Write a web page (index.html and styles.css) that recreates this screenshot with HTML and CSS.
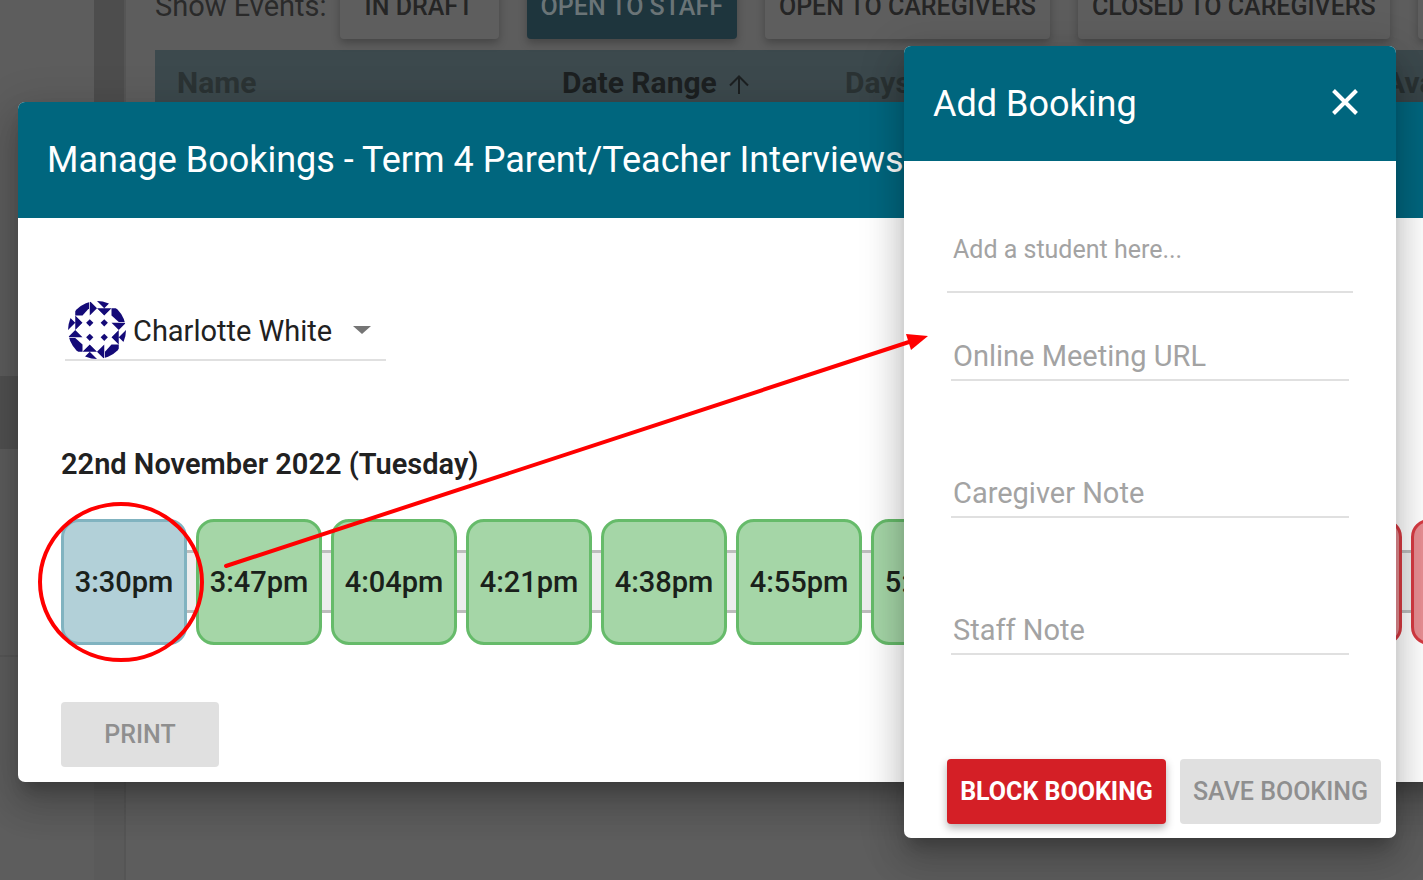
FILE: index.html
```
<!DOCTYPE html>
<html lang="en">
<head>
<meta charset="utf-8">
<title>Manage Bookings</title>
<meta name="viewport" content="width=device-width, initial-scale=1">
<link rel="stylesheet" href="styles.css">
</head>
<body>
<div class="app">
  <aside class="sidebar">
    <div class="sidebar-block"></div>
    <div class="sidebar-active"></div>
    <div class="sidebar-group"></div>
  </aside>
  <div class="gutter"></div>
  <main class="page">
    <div class="filters">
      <span class="filters-label">Show Events:</span>
      <button class="filter" type="button">IN DRAFT</button>
      <button class="filter filter-on" type="button">OPEN TO STAFF</button>
      <button class="filter" type="button">OPEN TO CAREGIVERS</button>
      <button class="filter" type="button">CLOSED TO CAREGIVERS</button>
      <button class="filter" type="button" aria-label="More"></button>
    </div>
    <table class="events">
      <thead>
        <tr>
          <th class="col-name">Name</th>
          <th class="col-range">Date Range
            <svg class="sort" viewBox="0 0 20 20" aria-hidden="true"><path d="M10 19V2M1 10.500L10 1.500L19 10.500"/></svg>
          </th>
          <th class="col-days">Days</th>
          <th class="col-avail">Available</th>
        </tr>
      </thead>
    </table>
  </main>

  <section class="dialog manage" aria-label="Manage Bookings">
    <header class="dialog-head">
      <h2 class="dialog-title">Manage Bookings - Term 4 Parent/Teacher Interviews</h2>
    </header>
    <div class="manage-body">
      <div class="staff">
        <svg class="avatar" viewBox="0 0 4 4" aria-hidden="true">
          <defs>
            <clipPath id="round"><circle cx="2" cy="2" r="2"/></clipPath>
            <g id="quarter">
              <path d="M.5 0H1.450V.5L1 1H.5Z"/>
              <path d="M1.500 0L2 .5L1.500 1Z"/>
              <path d="M2 0H3L2.500 .5ZM2 .5H3L2.500 1Z"/>
              <path d="M1.500 1.250L1.750 1.500L1.500 1.750L1.250 1.500Z"/>
            </g>
          </defs>
          <g clip-path="url(#round)">
            <use href="#quarter"/>
            <use href="#quarter" transform="rotate(90 2 2)"/>
            <use href="#quarter" transform="rotate(180 2 2)"/>
            <use href="#quarter" transform="rotate(270 2 2)"/>
          </g>
        </svg>
        <select class="staff-select" aria-label="Staff member"><option>Charlotte White</option></select>
        <svg class="caret" viewBox="0 0 18 8" aria-hidden="true"><path d="M0 0H18L9 8Z"/></svg>
      </div>
      <h3 class="day">22nd November 2022 (Tuesday)</h3>
      <div class="slots">
        <button class="slot slot-current" type="button">3:30pm</button>
        <button class="slot" type="button">3:47pm</button>
        <button class="slot" type="button">4:04pm</button>
        <button class="slot" type="button">4:21pm</button>
        <button class="slot" type="button">4:38pm</button>
        <button class="slot" type="button">4:55pm</button>
        <button class="slot" type="button">5:12pm</button>
        <button class="slot" type="button">5:29pm</button>
        <button class="slot" type="button">5:46pm</button>
        <button class="slot slot-blocked" type="button">6:03pm</button>
        <button class="slot slot-blocked" type="button">6:20pm</button>
      </div>
      <button class="btn btn-off print" type="button" disabled>PRINT</button>
    </div>
  </section>

  <section class="dialog booking" aria-label="Add Booking">
    <header class="dialog-head">
      <h2 class="dialog-title">Add Booking</h2>
      <button class="close" type="button" aria-label="Close">
        <svg class="close-icon" viewBox="0 0 26 26" aria-hidden="true"><path d="M1.500 1.500L24.500 24.500M24.500 1.500L1.500 24.500"/></svg>
      </button>
    </header>
    <form class="booking-form">
      <input class="student" type="text" placeholder="Add a student here..." aria-label="Student">
      <div class="notes">
        <input class="note" type="text" placeholder="Online Meeting URL" aria-label="Online Meeting URL">
        <input class="note" type="text" placeholder="Caregiver Note" aria-label="Caregiver Note">
        <input class="note" type="text" placeholder="Staff Note" aria-label="Staff Note">
      </div>
      <div class="actions">
        <button class="btn btn-block" type="button">BLOCK BOOKING</button>
        <button class="btn btn-off" type="button" disabled>SAVE BOOKING</button>
      </div>
    </form>
  </section>

  <svg class="markup" width="1" height="1" aria-hidden="true">
    <ellipse cx="121" cy="582" rx="81" ry="78"/>
    <path d="M226 566L912 341"/>
    <path class="markup-head" d="M928 336L906 334L911 350Z"/>
  </svg>
</div>
</body>
</html>
```
FILE: styles.css
```
* { box-sizing: border-box; }

body {
  margin: 0;
  font-family: Roboto, "Liberation Sans", sans-serif;
  color: #212121;
}

button, input, select { font-family: inherit; }

.app {
  position: relative;
  display: flex;
  min-height: 100vh;
  overflow: hidden;
  background: #5d5d5d;
}

/* Dimmed page behind the dialogs */
.sidebar {
  flex: none;
  width: 94px;
  display: flex;
  flex-direction: column;
}
.sidebar-block { height: 376px; }
.sidebar-active { height: 73px; background: #515151; }
.sidebar-group { height: 208px; border-bottom: 2px solid #575757; }

.gutter {
  flex: none;
  width: 32px;
  background: linear-gradient(#4d4d4d 400px, #5a5a5a 400px);
  border-right: 2px solid #555;
}

.page {
  flex: 1;
  min-width: 0;
  overflow: hidden;
  padding-left: 29px;
}

.filters {
  display: flex;
  align-items: flex-end;
  gap: 28px;
  height: 50px;
  padding-bottom: 11px;
  white-space: nowrap;
}
.filters-label {
  margin-right: -15px;
  font-size: 29px;
  line-height: 65px;
  color: #2a2a2a;
}
.filter {
  flex: none;
  min-width: 159px;
  height: 65px;
  padding: 0 14px;
  border: 0;
  border-radius: 4px;
  background: #5e5e5e;
  box-shadow: 0 4px 8px rgba(0, 0, 0, .26);
  font-size: 25px;
  font-weight: 500;
  color: #252525;
}
.filter-on { background: #1e353d; color: #6a7477; }

.events {
  table-layout: fixed;
  width: 1500px;
  border-collapse: collapse;
  background: #3c494d;
}
.events th {
  height: 65px;
  padding: 0 0 0 22px;
  text-align: left;
  font-size: 30px;
  font-weight: 700;
  color: #2b3334;
}
.col-name { width: 385px; }
.events .col-range { width: 283px; color: #1c2021; }
.col-days { width: 540px; }
.sort {
  width: 20px;
  height: 20px;
  margin-left: 5px;
  vertical-align: -2px;
  fill: none;
  stroke: #1c2021;
  stroke-width: 2;
}

/* Dialogs */
.dialog {
  position: absolute;
  border-radius: 7px;
  background: #fff;
  box-shadow: 0 13px 14px -7px rgba(0, 0, 0, .2),
    0 23px 34px 4px rgba(0, 0, 0, .14),
    0 9px 43px 7px rgba(0, 0, 0, .12);
}
.manage { left: 18px; right: -40px; top: 102px; }
.booking { right: 27px; top: 46px; width: 492px; }

.dialog-head {
  display: flex;
  align-items: center;
  justify-content: space-between;
  height: 116px;
  padding: 0 38px 0 29px;
  border-radius: 7px 7px 0 0;
  background: #00667e;
  color: #fff;
}
.booking .dialog-head { height: 115px; }
.dialog-title {
  margin: 0;
  font-size: 36px;
  font-weight: 400;
  white-space: nowrap;
}
.close {
  display: flex;
  margin-bottom: 4px;
  padding: 0;
  border: 0;
  background: none;
}
.close-icon {
  width: 26px;
  height: 26px;
  fill: none;
  stroke: #fff;
  stroke-width: 4;
}

.manage-body { padding: 83px 0 15px 43px; }

.staff {
  display: flex;
  align-items: center;
  width: 321px;
  height: 60px;
  margin-left: 4px;
  padding: 0 15px 0 3px;
  border-bottom: 2px solid #e0e0e0;
}
.avatar { flex: none; width: 58px; height: 58px; fill: #140a78; }
.staff-select {
  flex: 1;
  min-width: 0;
  height: 56px;
  padding: 2px 0 0 7px;
  border: 0;
  appearance: none;
  background: none;
  font-size: 29px;
  color: #212121;
}
.caret { flex: none; width: 18px; height: 8px; fill: #757575; }

.day {
  margin: 84px 0 36px;
  font-size: 29px;
  line-height: 38px;
  font-weight: 600;
}

.slots {
  display: flex;
  gap: 9px;
  background: linear-gradient(transparent 31px, #bdbdbd 31px 34px, #eee 34px 91px, #bdbdbd 91px 94px, transparent 94px);
}
.slot {
  flex: none;
  width: 126px;
  height: 126px;
  padding: 0;
  border: 3px solid #66bb6a;
  border-radius: 18px;
  background: #a5d6a7;
  font-size: 29px;
  font-weight: 500;
  color: #1a211b;
}
.slot-current { border-color: #81b3c0; background: #b2d0d8; }
.slot-blocked { border-color: #d83b43; background: #e98e93; }

.btn {
  height: 65px;
  padding: 0 10px;
  border: 0;
  border-radius: 4px;
  font-size: 25px;
  font-weight: 500;
  white-space: nowrap;
}
.btn-off { background: #e0e0e0; color: #8f8f8f; }
.btn-block {
  background: #d41f26;
  color: #fff;
  font-weight: 700;
  box-shadow: 0 4px 9px rgba(0, 0, 0, .3);
}
.print { display: block; width: 158px; margin-top: 57px; }

.booking-form { padding: 43px 15px 14px 43px; }

.student, .note {
  display: block;
  width: 100%;
  border: 0;
  border-bottom: 2px solid #e0e0e0;
  background: none;
  outline: 0;
}
.student {
  width: calc(100% - 28px);
  height: 89px;
  padding: 3px 6px 0;
  font-size: 25px;
}
.student::placeholder, .note::placeholder { color: #a3a3a3; opacity: 1; }

.notes {
  display: grid;
  gap: 85px;
  padding: 36px 32px 0 4px;
}
.note { height: 52px; padding: 4px 2px 0; font-size: 29px; }

.actions {
  display: grid;
  grid-template-columns: 219px 1fr;
  gap: 14px;
  margin-top: 104px;
}

/* Hand-drawn highlight over the dialogs */
.markup {
  position: absolute;
  left: 0;
  top: 0;
  overflow: visible;
  pointer-events: none;
  fill: none;
  stroke: #f00;
  stroke-width: 4;
  stroke-linecap: round;
}
.markup-head { fill: #f00; stroke: none; }
```
